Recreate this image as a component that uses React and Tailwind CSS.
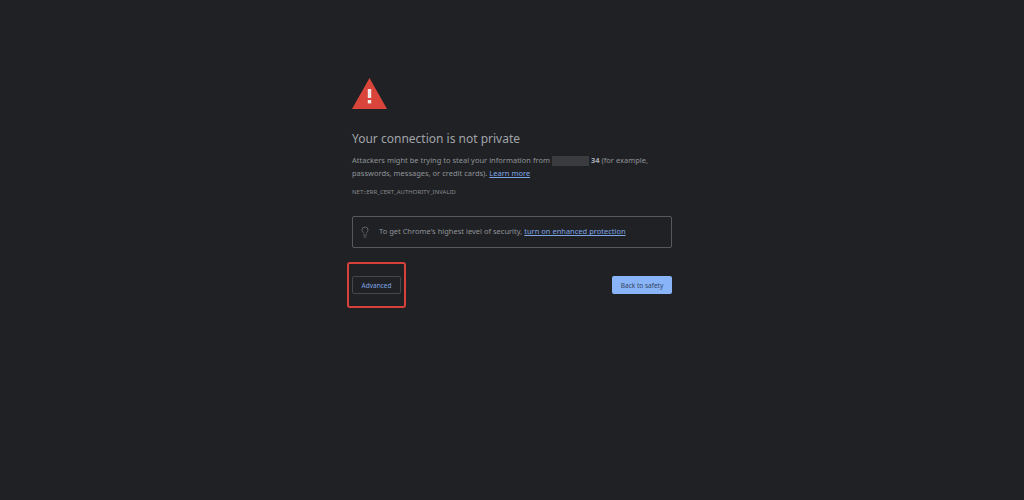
import { Lightbulb } from "lucide-react";

export default function App() {
  return (
    <div className="min-h-[500px] bg-[#202124] font-['Noto_Sans','Open_Sans',sans-serif] text-[#8f9499]">
      <div className="mx-auto w-[320px] pt-[78px]">
        <svg viewBox="0 0 35 31" className="block h-[31px] w-[35px]">
          <path d="M17.5 0 35 31H0z" fill="#d9453a" />
          <rect x="15.8" y="11" width="3.4" height="9" fill="#f4e9e7" />
          <rect x="15.8" y="22" width="3.4" height="3.4" fill="#f4e9e7" />
        </svg>

        <h1 className="mt-[21px] text-[12px] leading-[18px] font-normal text-[#a0a4a9]">
          Your connection is not private
        </h1>

        <p className="mt-[6px] text-[7.5px] leading-[13px]">
          Attackers might be trying to steal your information from{" "}
          <span className="inline-block h-[10px] w-[37px] bg-[#3a3b3e] align-middle"></span>{" "}
          <span className="font-bold text-[#a8abb0]">34</span> (for example, passwords, messages,
          or credit cards).{" "}
          <a className="text-[#7fa6e4] underline">Learn more</a>
        </p>

        <p className="mt-[7px] text-[6px] leading-[10px] text-[#85898e]">NET::ERR_CERT_AUTHORITY_INVALID</p>

        <div className="mt-[19px] flex h-[32px] items-center gap-[8px] rounded-[2px] border border-[#55585c] pl-[6px]">
          <Lightbulb className="h-[12px] w-[12px] text-[#737679]" strokeWidth={1.5} />
          <span className="text-[7.5px]">
            To get Chrome's highest level of security,{" "}
            <a className="text-[#7fa6e4] underline">turn on enhanced protection</a>
          </span>
        </div>

        <div className="mt-[28px] flex items-center justify-between">
          <div className="relative">
            <button className="flex h-[18px] w-[49px] items-center justify-center rounded-[2px] border border-[#44474b] pt-px text-[6.5px] text-[#7fa6e4]">
              Advanced
            </button>
            {/* red annotation box */}
            <div className="absolute -top-[14px] -left-[5px] h-[46px] w-[59px] rounded-[3px] border-2 border-[#d8403a]"></div>
          </div>
          <button className="flex h-[18px] w-[60px] items-center justify-center rounded-[2px] bg-[#8ab4f8] pt-px text-[6.5px] text-[#33445f]">
            Back to safety
          </button>
        </div>
      </div>
    </div>
  );
}
